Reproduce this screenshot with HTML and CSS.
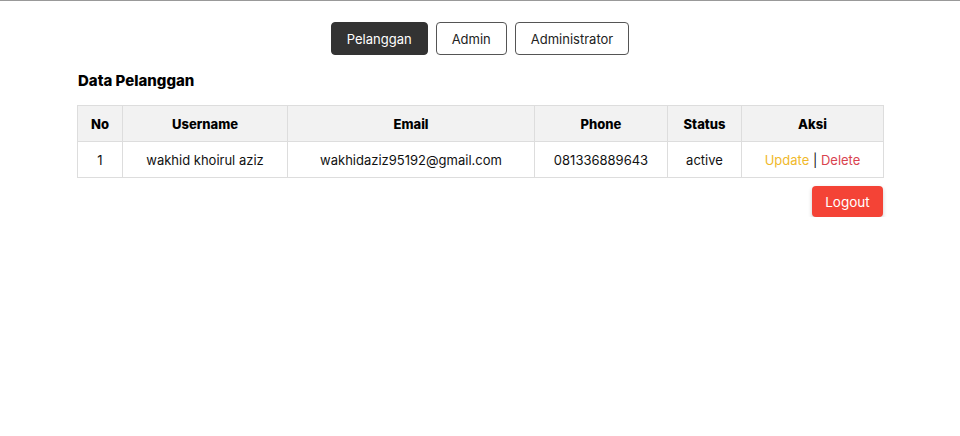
FILE: index.html
```html
<!DOCTYPE html>
<html>
<head>
<meta charset="utf-8">
<link rel="stylesheet" href="styles.css">
</head>
<body>
<div class="topline"></div>
<nav class="tabs">
  <a class="tab active">Pelanggan</a>
  <a class="tab">Admin</a>
  <a class="tab">Administrator</a>
</nav>
<main class="container">
  <h2 class="title">Data Pelanggan</h2>
  <table class="data">
    <thead>
      <tr>
        <th class="c-no">No</th>
        <th class="c-user">Username</th>
        <th class="c-email">Email</th>
        <th class="c-phone">Phone</th>
        <th class="c-status">Status</th>
        <th class="c-aksi">Aksi</th>
      </tr>
    </thead>
    <tbody>
      <tr>
        <td>1</td>
        <td>wakhid khoirul aziz</td>
        <td>wakhidaziz95192@gmail.com</td>
        <td>081336889643</td>
        <td>active</td>
        <td><a class="upd">Update</a> | <a class="del">Delete</a></td>
      </tr>
    </tbody>
  </table>
  <div class="actions">
    <button class="logout">Logout</button>
  </div>
</main>
</body>
</html>
```

FILE: styles.css
```css
* { box-sizing: border-box; }
html, body { margin: 0; padding: 0; background: #fff; }
body {
  font-family: "Inter", "Open Sans", sans-serif;
  color: #111;
  font-size: 13px;
}
.topline { height: 1px; background: #999; }
.tabs {
  display: flex;
  justify-content: center;
  gap: 8px;
  margin-top: 21px;
}
.tab {
  display: flex;
  align-items: center;
  justify-content: center;
  height: 33px;
  padding: 0 15px;
  border: 1px solid #555;
  border-radius: 4px;
  font-size: 13px;
  color: #222;
  background: #fff;
}
.tab.active { background: #333; border-color: #333; color: #fff; }
.container { width: 806px; margin: 0 auto; }
.title {
  margin: 17px 0 15px 1px;
  font-size: 15px;
  font-weight: 800;
  line-height: 18px;
  color: #000;
}
.data {
  width: 100%;
  border-collapse: collapse;
  table-layout: fixed;
}
.data th, .data td {
  border: 1px solid #ddd;
  height: 36px;
  text-align: center;
  padding: 0 6px;
  font-size: 13px;
}
.data th { background: #f2f2f2; font-weight: 800; color: #000; }
.data td { color: #111; }
.c-no { width: 45px; }
.c-user { width: 165px; }
.c-email { width: 247px; }
.c-phone { width: 133px; }
.c-status { width: 74px; }
.c-aksi { width: 142px; }
.upd { color: #f0b92b; }
.del { color: #d9434f; }
.actions { display: flex; justify-content: flex-end; margin-top: 8px; }
.logout {
  width: 71px;
  height: 31px;
  border: none;
  border-radius: 4px;
  background: #f44336;
  color: #fff;
  font-family: inherit;
  font-size: 13.5px;
  box-shadow: 0 2px 4px rgba(0,0,0,0.2);
}
```
